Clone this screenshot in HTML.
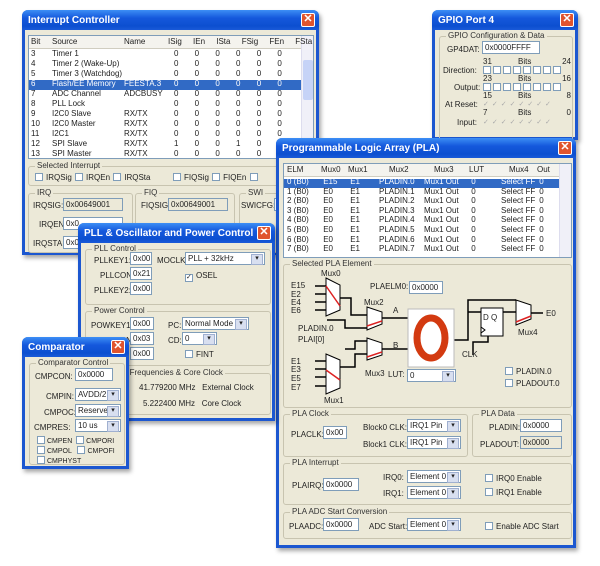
<!DOCTYPE html><html><head><style>
*{margin:0;padding:0;box-sizing:border-box}
body{width:600px;height:566px;background:#fff;position:relative;overflow:hidden;font-family:"Liberation Sans",sans-serif;font-size:8px;color:#222}
.w{position:absolute;background:#ece9d8;border:3px solid #1c57d0;border-top:0;border-radius:6px 6px 0 0;box-shadow:2px 3px 4px rgba(0,0,0,.35)}
.t{position:absolute;left:-3px;right:-3px;top:0;height:20px;background:linear-gradient(#3d8ef5,#1558dc 40%,#0c4fd0 80%,#1a5ad8);border-radius:6px 6px 0 0;color:#fff;font-weight:bold;font-size:10px;padding:5px 0 0 6px}
.x{position:absolute;right:4px;top:3px;width:14px;height:14px;background:#e0542e;border:1px solid #fff;border-radius:2px;color:#fff;font-size:11px;line-height:11px;text-align:center}
.a{position:absolute;white-space:nowrap}
.g{position:absolute;border:1px solid #c8c4b0;border-radius:3px}
.gl{position:absolute;top:-6px;left:6px;background:#ece9d8;padding:0 2px;color:#333}
.e{position:absolute;background:#fff;border:1px solid #7f9db9;height:13px;padding:1px 2px;font-size:8px}
.e.d{background:#ece9d8}
.s{position:absolute;background:#fff;border:1px solid #7f9db9;height:13px;padding:1px 2px;font-size:8px}
.s:after{content:"▾";position:absolute;right:1px;top:1px;width:10px;height:9px;background:#d8dff0;border:1px solid #a0b0d0;font-size:7px;line-height:8px;text-align:center}
.c{display:inline-block;width:8px;height:8px;border:1px solid #7f9db9;background:#fff;vertical-align:-1px;margin-right:3px}
.lb{position:absolute;background:#fff;border:1px solid #7f9db9;overflow:hidden}
.hd{position:absolute;left:0;right:0;top:0;height:13px;background:#f4f3ee;border-bottom:1px solid #d0cdc0}
.sb{position:absolute;right:0;top:0;bottom:0;width:12px;background:#f0f0f8;border-left:1px solid #dde}
.sel{position:absolute;background:#316ac5}
</style></head><body>

<!-- Interrupt Controller -->
<div class="w" style="left:22px;top:10px;width:297px;height:245px">
<div class="t">Interrupt Controller<div class="x">✕</div></div>
<div class="lb" style="left:3px;top:25px;width:286px;height:124px">
<div class="hd"></div>
<div class="sel" style="left:0;right:12px;top:44px;height:10px"></div>
<div class="sb"><div style="position:absolute;top:24px;left:1px;width:10px;height:40px;background:#c6d3f7;border-radius:2px"></div></div>
</div>
<div class="a" style="left:6px;top:27px">Bit</div>
<div class="a" style="left:27px;top:27px">Source</div>
<div class="a" style="left:99px;top:27px">Name</div>
<div class="a" style="left:143px;top:27px;word-spacing:9px">ISig IEn ISta FSig FEn FSta</div>
<div class="a" style="left:6px;top:39px;line-height:10px">3<br>4<br>5<br><span style="color:#fff">6</span><br>7<br>8<br>9<br>10<br>11<br>12<br>13</div>
<div class="a" style="left:27px;top:39px;line-height:10px">Timer 1<br>Timer 2 (Wake-Up)<br>Timer 3 (Watchdog)<br><span style="color:#fff">Flash/EE Memory</span><br>ADC Channel<br>PLL Lock<br>I2C0 Slave<br>I2C0 Master<br>I2C1<br>SPI Slave<br>SPI Master</div>
<div class="a" style="left:99px;top:39px;line-height:10px"><br><br><br><span style="color:#fff">FEESTA.3</span><br>ADCBUSY<br><br>RX/TX<br>RX/TX<br>RX/TX<br>RX/TX<br>RX/TX</div>
<div class="a" style="left:149px;top:39px;line-height:10px;word-spacing:14px">0 0 0 0 0 0<br>0 0 0 0 0 0<br>0 0 0 0 0 0<br><span style="color:#fff">0 0 0 0 0 0</span><br>0 0 0 0 0 0<br>0 0 0 0 0 0<br>0 0 0 0 0 0<br>0 0 0 0 0 0<br>0 0 0 0 0 0<br>1 0 0 1 0 0<br>0 0 0 0 0 0</div>
<div class="g" style="left:3px;top:156px;width:286px;height:20px"><span class="gl">Selected Interrupt</span>
<div class="a" style="left:6px;top:6px;word-spacing:1px"><span class="c"></span>IRQSig <span class="c"></span>IRQEn <span class="c"></span>IRQSta &nbsp; &nbsp; &nbsp; <span class="c"></span>FIQSig <span class="c"></span>FIQEn <span class="c"></span></div></div>
<div class="g" style="left:3px;top:183px;width:105px;height:60px"><span class="gl">IRQ</span></div>
<div class="a" style="left:8px;top:191px">IRQSIG:</div><div class="e d" style="left:38px;top:188px;width:60px">0x00649001</div>
<div class="a" style="left:14px;top:210px">IRQEN:</div><div class="e" style="left:38px;top:207px;width:60px">0x0</div>
<div class="a" style="left:8px;top:229px">IRQSTA:</div><div class="e" style="left:38px;top:226px;width:60px">0x0</div>
<div class="g" style="left:110px;top:183px;width:100px;height:60px"><span class="gl">FIQ</span></div>
<div class="a" style="left:116px;top:191px">FIQSIG:</div><div class="e d" style="left:143px;top:188px;width:60px">0x00649001</div>
<div class="g" style="left:214px;top:183px;width:75px;height:60px"><span class="gl">SWI</span></div>
<div class="a" style="left:216px;top:191px">SWICFG:</div><div class="e" style="left:249px;top:188px;width:40px">0</div>
</div>

<!-- GPIO -->
<div class="w" style="left:432px;top:10px;width:146px;height:130px">
<div class="t">GPIO Port 4<div class="x">✕</div></div>
<div class="g" style="left:4px;top:26px;width:134px;height:110px"><span class="gl">GPIO Configuration &amp; Data</span></div>
<div class="a" style="left:12px;top:35px">GP4DAT:</div><div class="e" style="left:47px;top:31px;width:58px">0x0000FFFF</div>
<div class="a" style="left:48px;top:48px;width:88px;line-height:8px">31<span style="position:absolute;left:35px">Bits</span><span style="position:absolute;right:0">24</span></div>
<div class="a" style="left:8px;top:56px">Direction:</div>
<div class="a" style="left:48px;top:65px;width:88px;line-height:8px">23<span style="position:absolute;left:35px">Bits</span><span style="position:absolute;right:0">16</span></div>
<div class="a" style="left:19px;top:73px">Output:</div>
<div class="a" style="left:48px;top:82px;width:88px;line-height:8px">15<span style="position:absolute;left:35px">Bits</span><span style="position:absolute;right:0">8</span></div>
<div class="a" style="left:10px;top:90px">At Reset:</div>
<div class="a" style="left:48px;top:99px;width:88px;line-height:8px">7<span style="position:absolute;left:35px">Bits</span><span style="position:absolute;right:0">0</span></div>
<div class="a" style="left:22px;top:108px">Input:</div>
<div class="a" style="left:48px;top:56px;letter-spacing:0"><span class="c" style="margin:0"></span><span class="c" style="margin:0 0 0 2px"></span><span class="c" style="margin:0 0 0 2px"></span><span class="c" style="margin:0 0 0 2px"></span><span class="c" style="margin:0 0 0 2px"></span><span class="c" style="margin:0 0 0 2px"></span><span class="c" style="margin:0 0 0 2px"></span><span class="c" style="margin:0 0 0 2px"></span></div>
<div class="a" style="left:48px;top:73px"><span class="c" style="margin:0"></span><span class="c" style="margin:0 0 0 2px"></span><span class="c" style="margin:0 0 0 2px"></span><span class="c" style="margin:0 0 0 2px"></span><span class="c" style="margin:0 0 0 2px"></span><span class="c" style="margin:0 0 0 2px"></span><span class="c" style="margin:0 0 0 2px"></span><span class="c" style="margin:0 0 0 2px"></span></div>
<div class="a" style="left:48px;top:90px;color:#aaa;font-size:7px;letter-spacing:3px">✓✓✓✓✓✓✓✓</div>
<div class="a" style="left:48px;top:108px;color:#aaa;font-size:7px;letter-spacing:3px">✓✓✓✓✓✓✓✓</div>
</div>

<!-- PLA -->
<div class="w" style="left:276px;top:138px;width:300px;height:410px">
<div class="t">Programmable Logic Array (PLA)<div class="x">✕</div></div>
<div class="lb" style="left:4px;top:25px;width:289px;height:95px">
<div class="hd"></div>
<div class="sel" style="left:0;right:12px;top:15px;height:9px"></div>
<div class="sb"></div>
</div>
<div class="a" style="left:8px;top:27px">ELM</div>
<div class="a" style="left:42px;top:27px">Mux0</div>
<div class="a" style="left:69px;top:27px">Mux1</div>
<div class="a" style="left:110px;top:27px">Mux2</div>
<div class="a" style="left:155px;top:27px">Mux3</div>
<div class="a" style="left:190px;top:27px">LUT</div>
<div class="a" style="left:230px;top:27px">Mux4</div>
<div class="a" style="left:258px;top:27px">Out</div>
<div class="a" style="left:8px;top:39px;line-height:9.6px"><span style="color:#fff">0 (B0)</span><br>1 (B0)<br>2 (B0)<br>3 (B0)<br>4 (B0)<br>5 (B0)<br>6 (B0)<br>7 (B0)</div>
<div class="a" style="left:42px;top:39px;line-height:9.6px"><span style="color:#fff">&nbsp;E15</span><br>&nbsp;E0<br>&nbsp;E0<br>&nbsp;E0<br>&nbsp;E0<br>&nbsp;E0<br>&nbsp;E0<br>&nbsp;E0</div>
<div class="a" style="left:69px;top:39px;line-height:9.6px"><span style="color:#fff">&nbsp;E1</span><br>&nbsp;E1<br>&nbsp;E1<br>&nbsp;E1<br>&nbsp;E1<br>&nbsp;E1<br>&nbsp;E1<br>&nbsp;E1</div>
<div class="a" style="left:100px;top:39px;line-height:9.6px"><span style="color:#fff">PLADIN.0</span><br>PLADIN.1<br>PLADIN.2<br>PLADIN.3<br>PLADIN.4<br>PLADIN.5<br>PLADIN.6<br>PLADIN.7</div>
<div class="a" style="left:145px;top:39px;line-height:9.6px"><span style="color:#fff">Mux1 Out</span><br>Mux1 Out<br>Mux1 Out<br>Mux1 Out<br>Mux1 Out<br>Mux1 Out<br>Mux1 Out<br>Mux1 Out</div>
<div class="a" style="left:190px;top:39px;line-height:9.6px"><span style="color:#fff">&nbsp;0</span><br>&nbsp;0<br>&nbsp;0<br>&nbsp;0<br>&nbsp;0<br>&nbsp;0<br>&nbsp;0<br>&nbsp;0</div>
<div class="a" style="left:222px;top:39px;line-height:9.6px"><span style="color:#fff">Select FF</span><br>Select FF<br>Select FF<br>Select FF<br>Select FF<br>Select FF<br>Select FF<br>Select FF</div>
<div class="a" style="left:258px;top:39px;line-height:9.6px"><span style="color:#fff">&nbsp;0</span><br>&nbsp;0<br>&nbsp;0<br>&nbsp;0<br>&nbsp;0<br>&nbsp;0<br>&nbsp;0<br>&nbsp;0</div>
<div class="g" style="left:4px;top:126px;width:289px;height:144px"><span class="gl">Selected PLA Element</span></div>
<svg class="a" style="left:0;top:0" width="300" height="410" viewBox="276 138 300 410">
<g fill="none" stroke="#000" stroke-width="1.5">
<path d="M312 286H323M312 294H323M312 302H323M312 310H323M337 298H348V315H364M324 320H342V328H364M342 349H352V341H364M337 367H352V354H364M379 318H405M379 349H405M450 340H465V312H478M465 312V300H513M500 312H513M528 313H540M485 336V342H470V355M312 361H323M312 369H323M312 377H323M312 386H323"/>
</g>
<path d="M323 278L337 285V310L323 316Z" fill="#fff" stroke="#000"/>
<path d="M323 354L337 360V388L323 394Z" fill="#fff" stroke="#000"/>
<path d="M364 307L379 312V324L364 330Z" fill="#fff" stroke="#000"/>
<path d="M364 338L379 343V355L364 360Z" fill="#fff" stroke="#000"/>
<path d="M513 300L528 305V319L513 325Z" fill="#fff" stroke="#000"/>
<path d="M323 286L337 306M323 370L337 380M364 326L379 321M364 357L379 352M513 322L528 316" stroke="#d22" stroke-width="1.5"/>
<rect x="405" y="309" width="46" height="58" fill="#fff" stroke="#bbb"/>
<ellipse cx="428" cy="338" rx="14" ry="20" fill="none" stroke="#d33a10" stroke-width="7"/>
<rect x="478" y="308" width="22" height="28" fill="#fff" stroke="#000"/>
<path d="M478 327L482 330L478 333" fill="none" stroke="#000"/>
<g font-size="8" font-family="Liberation Sans" fill="#222">
<text x="318" y="276">Mux0</text><text x="288" y="288">E15</text><text x="288" y="297">E2</text><text x="288" y="305">E4</text><text x="288" y="313">E6</text>
<text x="361" y="305">Mux2</text><text x="390" y="313">A</text><text x="390" y="348">B</text>
<text x="295" y="331">PLADIN.0</text><text x="295" y="342">PLAI[0]</text>
<text x="288" y="364">E1</text><text x="288" y="372">E3</text><text x="288" y="381">E5</text><text x="288" y="390">E7</text>
<text x="362" y="376">Mux3</text><text x="321" y="403">Mux1</text>
<text x="367" y="289">PLAELM0:</text><text x="480" y="320">D Q</text><text x="459" y="357">CLK</text><text x="515" y="335">Mux4</text><text x="543" y="316">E0</text>
<text x="385" y="377">LUT:</text>
</g>
</svg>
<div class="e" style="left:130px;top:143px;width:34px">0x0000</div>
<div class="s" style="left:128px;top:231px;width:49px">0</div>
<div class="a" style="left:226px;top:229px"><span class="c"></span>PLADIN.0</div>
<div class="a" style="left:226px;top:241px"><span class="c"></span>PLADOUT.0</div>
<div class="g" style="left:4px;top:276px;width:185px;height:43px"><span class="gl">PLA Clock</span></div>
<div class="a" style="left:12px;top:292px">PLACLK:</div><div class="e" style="left:44px;top:288px;width:24px">0x00</div>
<div class="a" style="left:84px;top:285px">Block0 CLK:</div><div class="s" style="left:128px;top:281px;width:54px">IRQ1 Pin</div>
<div class="a" style="left:84px;top:302px">Block1 CLK:</div><div class="s" style="left:128px;top:298px;width:54px">IRQ1 Pin</div>
<div class="g" style="left:193px;top:276px;width:100px;height:43px"><span class="gl">PLA Data</span></div>
<div class="a" style="left:210px;top:285px">PLADIN:</div><div class="e" style="left:241px;top:281px;width:42px">0x0000</div>
<div class="a" style="left:201px;top:302px">PLADOUT:</div><div class="e d" style="left:241px;top:298px;width:42px">0x0000</div>
<div class="g" style="left:4px;top:325px;width:289px;height:42px"><span class="gl">PLA Interrupt</span></div>
<div class="a" style="left:13px;top:343px">PLAIRQ:</div><div class="e" style="left:44px;top:340px;width:36px">0x0000</div>
<div class="a" style="left:104px;top:335px">IRQ0:</div><div class="s" style="left:128px;top:332px;width:54px">Element 0</div>
<div class="a" style="left:104px;top:351px">IRQ1:</div><div class="s" style="left:128px;top:348px;width:54px">Element 0</div>
<div class="a" style="left:206px;top:336px"><span class="c"></span>IRQ0 Enable</div>
<div class="a" style="left:206px;top:350px"><span class="c"></span>IRQ1 Enable</div>
<div class="g" style="left:4px;top:374px;width:289px;height:27px"><span class="gl">PLA ADC Start Conversion</span></div>
<div class="a" style="left:10px;top:384px">PLAADC:</div><div class="e" style="left:44px;top:380px;width:36px">0x0000</div>
<div class="a" style="left:90px;top:384px">ADC Start:</div><div class="s" style="left:128px;top:380px;width:54px">Element 0</div>
<div class="a" style="left:206px;top:384px"><span class="c"></span>Enable ADC Start</div>
</div>

<!-- PLL -->
<div class="w" style="left:78px;top:223px;width:197px;height:198px">
<div class="t">PLL &amp; Oscillator and Power Control<div class="x">✕</div></div>
<div class="g" style="left:4px;top:26px;width:186px;height:56px"><span class="gl">PLL Control</span></div>
<div class="a" style="left:13px;top:33px">PLLKEY1:</div><div class="e" style="left:49px;top:29px;width:22px">0x00</div>
<div class="a" style="left:76px;top:33px">MOCLK:</div><div class="s" style="left:104px;top:29px;width:80px">PLL + 32kHz</div>
<div class="a" style="left:19px;top:48px">PLLCON:</div><div class="e" style="left:49px;top:44px;width:22px">0x21</div>
<div class="a" style="left:104px;top:48px"><span class="c" style="font-size:7px;line-height:6px">✓</span>OSEL</div>
<div class="a" style="left:13px;top:63px">PLLKEY2:</div><div class="e" style="left:49px;top:59px;width:22px">0x00</div>
<div class="g" style="left:4px;top:88px;width:186px;height:55px"><span class="gl">Power Control</span></div>
<div class="a" style="left:10px;top:98px">POWKEY1:</div><div class="e" style="left:49px;top:94px;width:24px">0x00</div>
<div class="a" style="left:14px;top:113px">POWCON:</div><div class="e" style="left:49px;top:109px;width:24px">0x03</div>
<div class="e" style="left:49px;top:124px;width:24px">0x00</div>
<div class="a" style="left:87px;top:98px">PC:</div><div class="s" style="left:101px;top:94px;width:67px">Normal Mode</div>
<div class="a" style="left:87px;top:113px">CD:</div><div class="s" style="left:101px;top:109px;width:35px">0</div>
<div class="a" style="left:104px;top:127px"><span class="c"></span>FINT</div>
<div class="g" style="left:4px;top:150px;width:186px;height:42px"><span class="gl">Oscillator Frequencies &amp; Core Clock</span></div>
<div class="a" style="left:58px;top:160px">41.779200 MHz &nbsp;&nbsp;External Clock</div>
<div class="a" style="left:62px;top:176px">5.222400 MHz &nbsp;&nbsp;Core Clock</div>
</div>

<!-- Comparator -->
<div class="w" style="left:22px;top:337px;width:107px;height:132px">
<div class="t">Comparator<div class="x">✕</div></div>
<div class="g" style="left:4px;top:26px;width:96px;height:102px"><span class="gl">Comparator Control</span></div>
<div class="a" style="left:10px;top:35px">CMPCON:</div><div class="e" style="left:50px;top:31px;width:38px">0x0000</div>
<div class="a" style="left:21px;top:55px">CMPIN:</div><div class="s" style="left:50px;top:51px;width:46px">AVDD/2</div>
<div class="a" style="left:19px;top:71px">CMPOC:</div><div class="s" style="left:50px;top:67px;width:46px">Reserved</div>
<div class="a" style="left:9px;top:86px">CMPRES:</div><div class="s" style="left:50px;top:82px;width:46px">10 us</div>
<div class="a" style="left:12px;top:99px;line-height:10px;font-size:7px"><span class="c" style="margin-right:2px"></span>CMPEN &nbsp;<span class="c" style="margin-right:2px"></span>CMPORI</div>
<div class="a" style="left:12px;top:109px;line-height:10px;font-size:7px"><span class="c" style="margin-right:2px"></span>CMPOL &nbsp;&nbsp;<span class="c" style="margin-right:2px"></span>CMPOFI</div>
<div class="a" style="left:12px;top:119px;line-height:10px;font-size:7px"><span class="c" style="margin-right:2px"></span>CMPHYST</div>
</div>
</body></html>
